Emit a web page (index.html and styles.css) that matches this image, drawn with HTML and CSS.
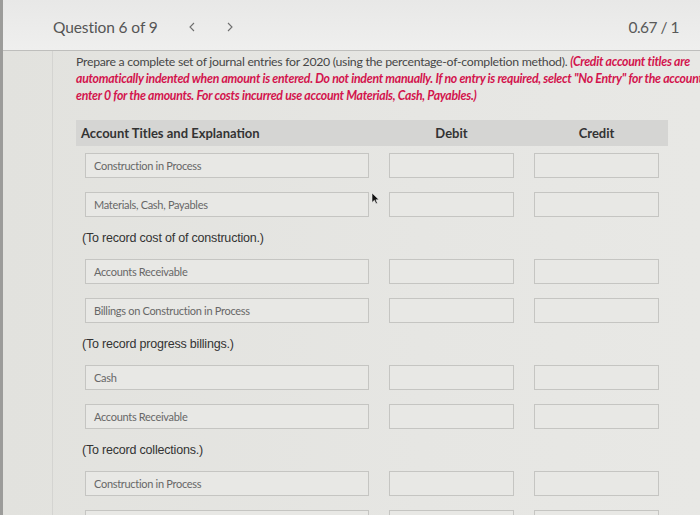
FILE: index.html
```html
<!DOCTYPE html>
<html lang="en">
<head>
<meta charset="utf-8">
<title>Question 6 of 9</title>
<link rel="stylesheet" href="styles.css">
</head>
<body>
<div class="screen">
  <header class="topbar">
    <div class="qnav">
      <span class="qtitle">Question 6 of 9</span>
      <span class="chev chev-prev"><svg width="6" height="10" viewBox="0 0 6 10"><polyline points="5,1 1,5 5,9" fill="none" stroke="#6e6e6e" stroke-width="1.1"/></svg></span>
      <span class="chev chev-next"><svg width="6" height="10" viewBox="0 0 6 10"><polyline points="1,1 5,5 1,9" fill="none" stroke="#6e6e6e" stroke-width="1.1"/></svg></span>
    </div>
    <div class="score">0.67 / 1</div>
  </header>
  <main class="content">
    <p class="prompt">Prepare a complete set of journal entries for 2020 (using the percentage-of-completion method). <em class="req">(Credit account titles are<br>automatically indented when amount is entered. Do not indent manually. If no entry is required, select "No Entry" for the account titles and<br>enter 0 for the amounts. For costs incurred use account Materials, Cash, Payables.)</em></p>
    <div class="journal">
      <div class="jhead">
        <span class="h-acct">Account Titles and Explanation</span>
        <span class="h-num">Debit</span>
        <span class="h-num">Credit</span>
      </div>
      <div class="jbody">
        <div class="jrow"><div class="field acct">Construction in Process</div><div class="field"></div><div class="field"></div></div>
        <div class="jrow"><div class="field acct">Materials, Cash, Payables</div><div class="field"></div><div class="field"></div></div>
        <div class="note">(To record cost of of construction.)</div>
        <div class="jrow"><div class="field acct">Accounts Receivable</div><div class="field"></div><div class="field"></div></div>
        <div class="jrow"><div class="field acct">Billings on Construction in Process</div><div class="field"></div><div class="field"></div></div>
        <div class="note">(To record progress billings.)</div>
        <div class="jrow"><div class="field acct">Cash</div><div class="field"></div><div class="field"></div></div>
        <div class="jrow"><div class="field acct">Accounts Receivable</div><div class="field"></div><div class="field"></div></div>
        <div class="note">(To record collections.)</div>
        <div class="jrow"><div class="field acct">Construction in Process</div><div class="field"></div><div class="field"></div></div>
        <div class="jrow"><div class="field acct"></div><div class="field"></div><div class="field"></div></div>
      </div>
    </div>
  </main>
  <svg class="cursor" width="9" height="13" viewBox="0 0 9 13"><path d="M1 1 L1 10.5 L3.4 8.3 L5 11.8 L6.4 11.2 L4.9 7.8 L8 7.8 Z" fill="#111" stroke="#f2f2f2" stroke-width="0.6"/></svg>
</div>
</body>
</html>
```
FILE: styles.css
```css
html, body {
  margin: 0;
  padding: 0;
}
body {
  background: #e4e4e0;
  font-family: Lato, "Open Sans", sans-serif;
  overflow: hidden;
}
.screen {
  position: relative;
  width: 700px;
  height: 515px;
  box-sizing: border-box;
  border-left: 3px solid #9c9c9a;
  display: flex;
  flex-direction: column;
  background: linear-gradient(90deg, #e2e2de 0%, #e6e6e3 60%, #e8e8e5 100%);
  overflow: hidden;
}
.topbar {
  height: 51px;
  flex: none;
  box-sizing: border-box;
  border-bottom: 1px solid #bebebc;
  background: linear-gradient(#e8e8e7, #efefee);
  display: flex;
  align-items: center;
  justify-content: space-between;
  padding: 3px 21px 0 50px;
}
.qnav {
  display: flex;
  align-items: center;
}
.qtitle {
  font-size: 15.5px;
  color: #555;
  letter-spacing: -0.1px;
}
.chev {
  display: flex;
  align-items: center;
}
.chev-prev {
  margin-left: 31px;
}
.chev-next {
  margin-left: 32px;
}
.score {
  font-size: 15.5px;
  color: #595959;
  letter-spacing: -0.5px;
}
.content {
  flex: 1;
  margin-left: 49px;
  border-left: 1px solid #d4d4d1;
  padding-left: 23px;
}
.prompt {
  margin: 2px 0 0;
  font-size: 12.3px;
  line-height: 17px;
  letter-spacing: -0.28px;
  color: #474747;
  white-space: nowrap;
}
.req {
  color: #d3144d;
  font-weight: 700;
  font-style: italic;
}
.journal {
  margin-top: 16px;
  width: 592px;
}
.jhead {
  height: 26px;
  background: #d5d5d3;
  display: grid;
  grid-template-columns: 284px 125px 125px;
  column-gap: 20px;
  padding: 0 9px;
  align-items: center;
  font-size: 13px;
  font-weight: 700;
  color: #333;
}
.h-acct {
  margin-left: -4px;
}
.h-num {
  text-align: center;
}
.jbody {
  padding: 7px 9px 0;
  display: flex;
  flex-direction: column;
  gap: 14px;
}
.jrow {
  display: grid;
  grid-template-columns: 284px 125px 125px;
  column-gap: 20px;
  height: 25px;
}
.field {
  box-sizing: border-box;
  border: 1px solid #c5c5c2;
  background: #e8e8e5;
  font-size: 11px;
  letter-spacing: -0.3px;
  color: #676767;
  padding-left: 8px;
  display: flex;
  align-items: center;
  white-space: nowrap;
}
.note {
  height: 14px;
  line-height: 14px;
  margin-left: -3px;
  font-family: "Liberation Sans", Arial, sans-serif;
  font-size: 12.5px;
  letter-spacing: -0.2px;
  color: #333;
}
.cursor {
  position: absolute;
  left: 368px;
  top: 192px;
}
```
